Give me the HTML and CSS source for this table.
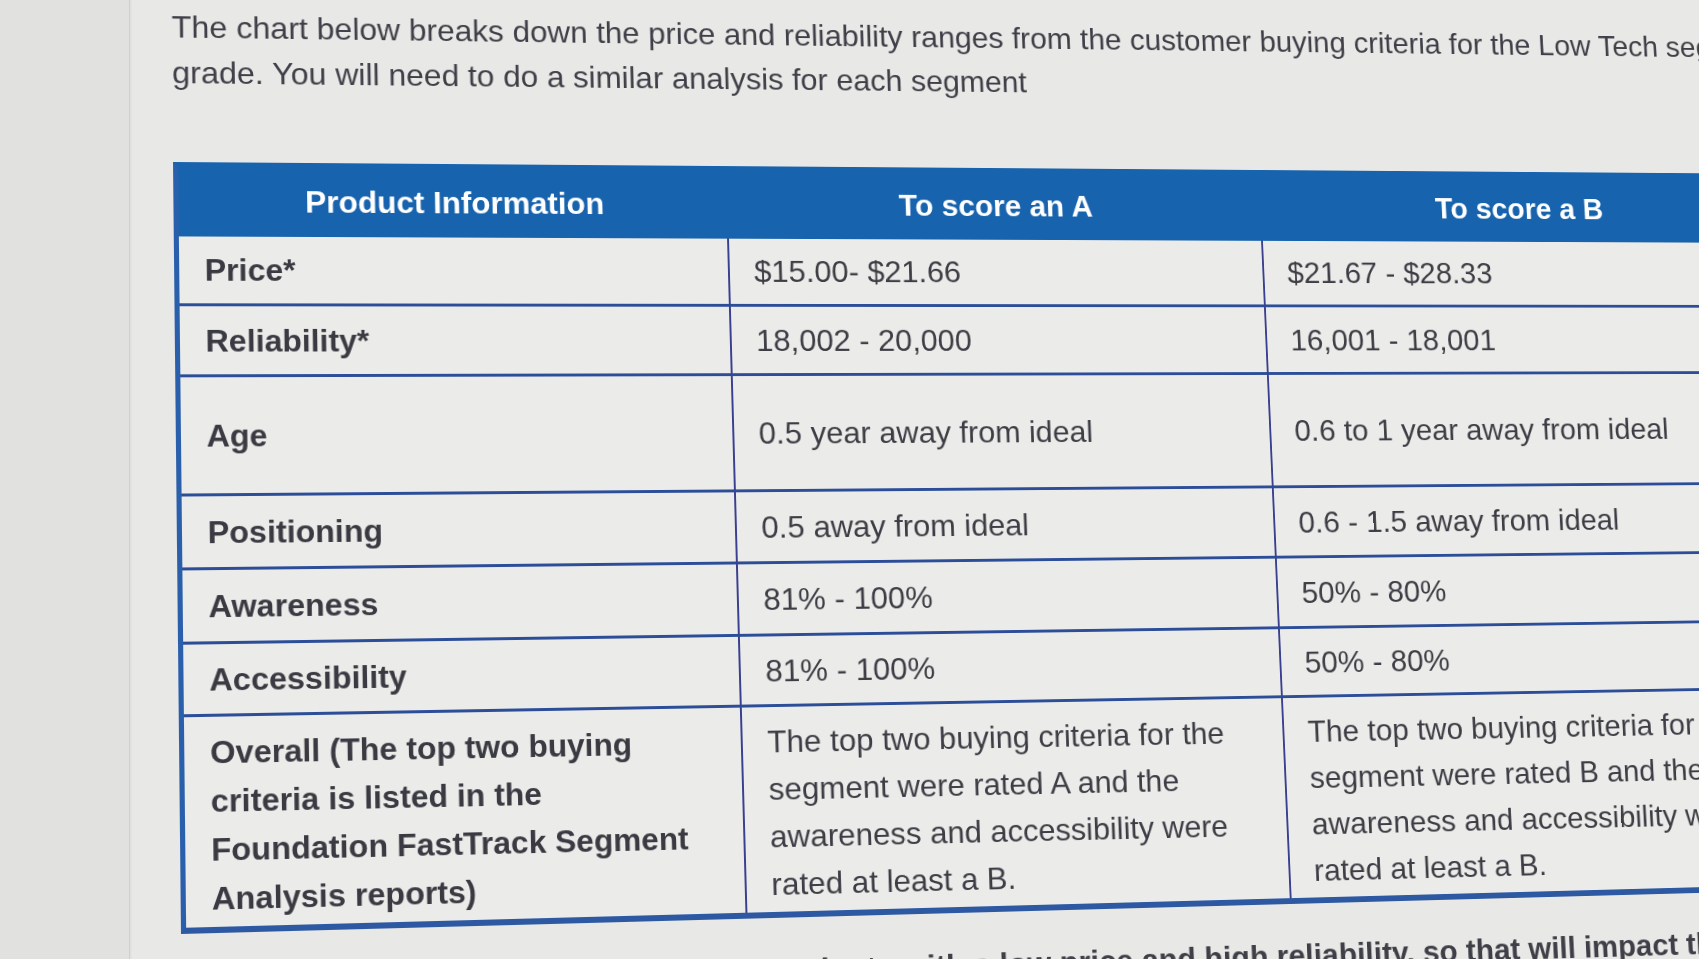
FILE: index.html
```html
<!DOCTYPE html>
<html lang="en">
<head>
<meta charset="utf-8">
<title>Customer buying criteria</title>
<link rel="stylesheet" href="styles.css">
</head>
<body>
<div class="screen">
  <aside class="sidebar"></aside>
  <main class="content">
    <p class="intro">The chart below breaks down the price and reliability ranges from the customer buying criteria for the Low Tech segment to earn an A or B<br>grade. You will need to do a similar analysis for each segment</p>
    <table class="grid">
      <colgroup>
        <col class="c-label">
        <col class="c-val-a">
        <col class="c-val-b">
      </colgroup>
      <thead>
        <tr>
          <th>Product Information</th>
          <th>To score an A</th>
          <th>To score a B</th>
        </tr>
      </thead>
      <tbody>
        <tr class="r-price">
          <td class="label">Price*</td>
          <td>$15.00- $21.66</td>
          <td>$21.67 - $28.33</td>
        </tr>
        <tr class="r-rel">
          <td class="label">Reliability*</td>
          <td>18,002 - 20,000</td>
          <td>16,001 - 18,001</td>
        </tr>
        <tr class="r-age">
          <td class="label">Age</td>
          <td>0.5 year away from ideal</td>
          <td>0.6 to 1 year away from ideal</td>
        </tr>
        <tr class="r-pos">
          <td class="label">Positioning</td>
          <td>0.5 away from ideal</td>
          <td>0.6 - 1.5 away from ideal</td>
        </tr>
        <tr class="r-aw">
          <td class="label">Awareness</td>
          <td>81% - 100%</td>
          <td>50% - 80%</td>
        </tr>
        <tr class="r-acc">
          <td class="label">Accessibility</td>
          <td>81% - 100%</td>
          <td>50% - 80%</td>
        </tr>
        <tr class="r-overall">
          <td class="label">Overall (The top two buying criteria is listed in the Foundation FastTrack Segment Analysis reports)</td>
          <td>The top two buying criteria for the segment were rated A and the awareness and accessibility were rated at least a B.</td>
          <td>The top two buying criteria for the segment were rated B and the awareness and accessibility were rated at least a B.</td>
        </tr>
      </tbody>
    </table>
    <p class="note">Buyers in the Low Tech segment like products with a low price and high reliability, so that will impact the grades you give.</p>
  </main>
</div>
</body>
</html>
```
FILE: styles.css
```css
html, body {
  margin: 0;
  padding: 0;
  width: 100%;
  height: 100%;
  overflow: hidden;
}

body {
  background: #e7e7e5;
  font-family: "Liberation Sans", Arial, sans-serif;
  color: #3d3d45;
}

.screen {
  display: flex;
  width: 1699px;
  height: 959px;
  overflow: hidden;
  background: #e8e8e6;
}

.sidebar {
  flex: 0 0 130px;
  box-sizing: border-box;
  background: #e1e1df;
  border-right: 1px solid #d0d0ce;
  box-shadow: 1px 0 2px rgba(0, 0, 0, 0.05);
}

.content {
  flex: none;
  width: 1800px;
  box-sizing: border-box;
  padding-left: 43px;
  transform-origin: 0 0;
  transform: matrix3d(1.016993, 0.0148151, 0, 0.0000452502,
                      0.0088100, 0.969234, 0, -0.0000298461,
                      0, 0, 1, 0,
                      -2.28216, 3.878896, 0, 1);
}

.intro {
  margin: 0;
  font-size: 32px;
  line-height: 46.5px;
  white-space: nowrap;
  color: #3f3f48;
}

.grid {
  margin-top: 69px;
  border-collapse: separate;
  border-spacing: 0;
  table-layout: fixed;
  width: 1695px;
  border: 5px solid #2a5fab;
  border-top-color: #1763ad;
  border-bottom: 6px solid #2d58a2;
  background: #ebebe9;
}

.c-label { width: 551px; }
.c-val-a { width: 564px; }
.c-val-b { width: 570px; }

.grid th {
  height: 71px;
  box-sizing: border-box;
  padding: 0;
  background: #1763ad;
  color: #ffffff;
  font-size: 31.5px;
  font-weight: bold;
  text-align: center;
  vertical-align: middle;
}

.grid td {
  box-sizing: border-box;
  padding: 0 30px 0 25px;
  border-bottom: 3px solid #2c4d98;
  font-size: 32px;
  line-height: 48px;
  vertical-align: middle;
  color: #3d3d45;
  text-align: left;
}

.grid td + td {
  border-left: 2px solid #3a4090;
}

.grid td.label {
  font-size: 31.6px;
  font-weight: bold;
  padding-right: 38px;
  color: #3a3a42;
}

.r-price td { height: 71px; }
.r-rel td { height: 72px; }
.r-age td { height: 120px; }
.r-pos td { height: 74px; }
.r-aw td { height: 74px; }
.r-acc td { height: 72px; }

.r-overall td {
  height: 207px;
  border-bottom: 0;
  vertical-align: top;
  padding-top: 11px;
}

.note {
  margin: 30px 0 0 0;
  font-size: 32px;
  line-height: 46px;
  font-weight: bold;
  white-space: nowrap;
  color: #3f3f48;
}
```
